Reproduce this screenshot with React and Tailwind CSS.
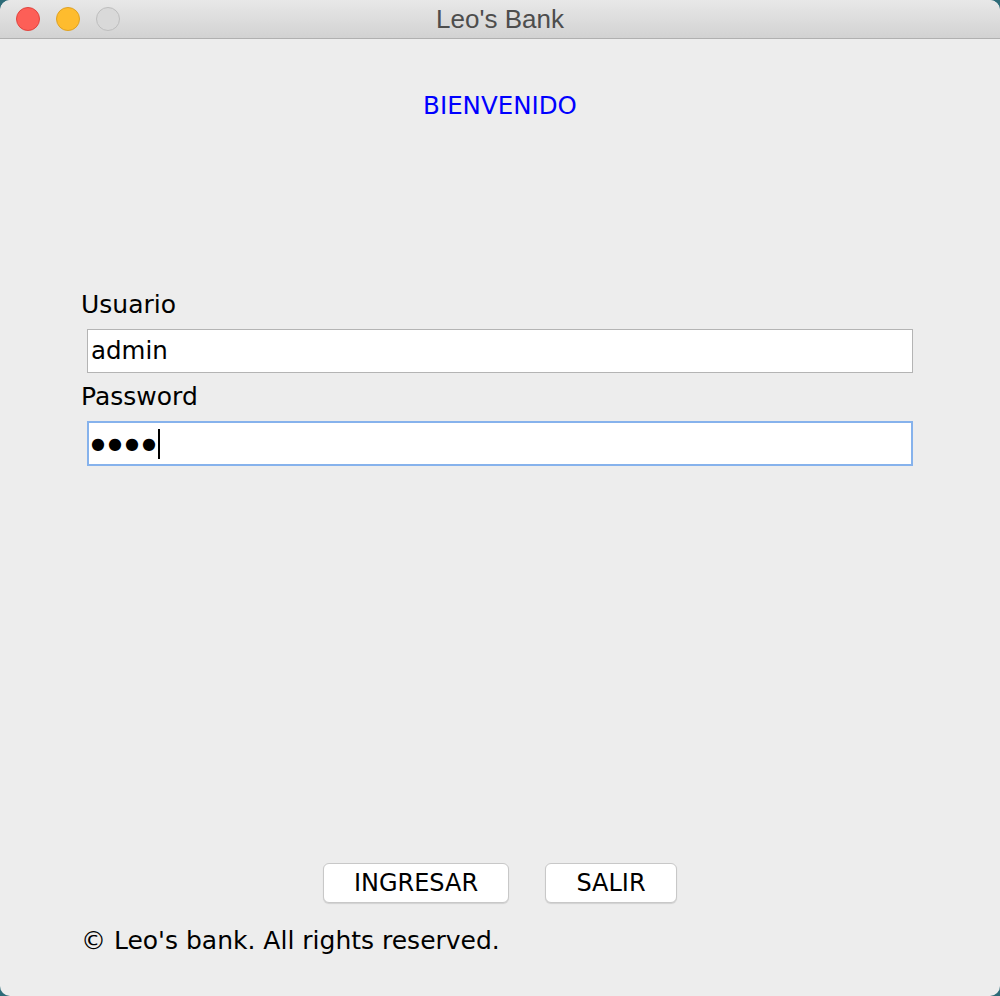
const font = "font-['DejaVu_Sans',sans-serif]";

const TitleBar = () => {
  return (
    <div className="relative flex h-[39px] items-center border-b border-[#b0b0b0] bg-gradient-to-b from-[#e8e8e8] to-[#d2d2d2] rounded-t-[10px]">
      <div className="flex items-center gap-[16px] pl-[16px]">
        <span className="h-[24px] w-[24px] rounded-full border border-[#e0443e] bg-[#fd5f57]" />
        <span className="h-[24px] w-[24px] rounded-full border border-[#dea123] bg-[#febc2e]" />
        <span className="h-[24px] w-[24px] rounded-full border border-[#bdbdbd] bg-[#d9d9d9]" />
      </div>
      <div className="absolute inset-0 flex items-center justify-center font-['Liberation_Sans',sans-serif] text-[26px] text-[#4d4d4d]">
        Leo's Bank
      </div>
    </div>
  );
};

const App = () => {
  return (
    <div className="h-[996px] w-[1000px] bg-[#2d6b78]">
      <div className={`h-full w-full overflow-hidden rounded-[10px] bg-[#ededed] ${font}`}>
        <TitleBar />
        <main className="flex flex-col">
          <h1 className="mt-[52px] text-center text-[24.5px] leading-[30px] text-[#0000ff]">
            BIENVENIDO
          </h1>
          <label className="ml-[81px] mt-[169px] text-[25px] leading-[30px] text-black">
            Usuario
          </label>
          <div className="ml-[87px] mt-[9px] flex h-[44px] w-[826px] items-center border border-[#b4b4b4] bg-white pl-[3px] text-[24.5px] text-black">
            admin
          </div>
          <label className="ml-[81px] mt-[9px] text-[25px] leading-[30px] text-black">
            Password
          </label>
          <div className="ml-[87px] mt-[9px] flex h-[45px] w-[826px] items-center border-2 border-[#86b2ec] bg-white pl-[2px] text-black">
            <span className="text-[16px] leading-none tracking-[3px]">●●●●</span>
            <span className="-ml-[1px] h-[30px] w-[2px] bg-black" />
          </div>
          <div className="mt-[397px] flex justify-center gap-[36px]">
            <button className="h-[40px] w-[186px] rounded-[6px] border border-[#c8c8c8] bg-white text-[24px] leading-none text-black shadow-[0_1px_1px_rgba(0,0,0,0.12)]">
              INGRESAR
            </button>
            <button className="h-[40px] w-[132px] rounded-[6px] border border-[#c8c8c8] bg-white text-[24px] leading-none text-black shadow-[0_1px_1px_rgba(0,0,0,0.12)]">
              SALIR
            </button>
          </div>
          <p className="ml-[81px] mt-[23px] text-[25px] leading-[30px] text-black">
            © Leo's bank. All rights reserved.
          </p>
        </main>
      </div>
    </div>
  );
};

export default App;
